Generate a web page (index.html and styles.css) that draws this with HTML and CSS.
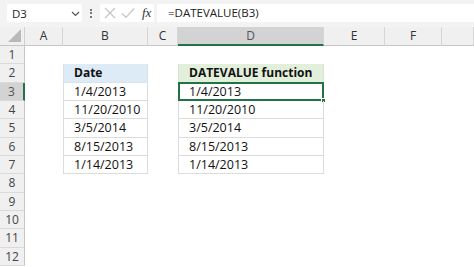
FILE: index.html
```html
<!DOCTYPE html>
<html>
<head>
<meta charset="utf-8">
<link rel="stylesheet" href="styles.css">
</head>
<body>
<div class="app">
  <div class="toolbar">
    <div class="namebox">
      <span>D3</span>
      <svg class="chev" width="9" height="6" viewBox="0 0 9 6"><path d="M1 1 L4.5 4.5 L8 1" fill="none" stroke="#555" stroke-width="1.2"/></svg>
    </div>
    <div class="dots"><i></i><i></i><i></i></div>
    <div class="fxbox">
      <svg width="12" height="12" viewBox="0 0 12 12"><path d="M1 1 L11 11 M11 1 L1 11" stroke="#c4c4c4" stroke-width="1.2" fill="none"/></svg>
      <svg width="14" height="12" viewBox="0 0 14 12"><path d="M1 6.5 L5 10.5 L13 1.5" stroke="#c4c4c4" stroke-width="1.2" fill="none"/></svg>
      <span class="fx">fx</span>
    </div>
    <div class="formula">=DATEVALUE(B3)</div>
  </div>
  <div class="sheet">
    <div class="corner"><svg width="13" height="13" viewBox="0 0 13 13"><path d="M13 0 L13 13 L0 13 Z" fill="#b9b9b9"/></svg></div>
    <div class="ch">A</div><div class="ch">B</div><div class="ch">C</div><div class="ch sel">D</div><div class="ch">E</div><div class="ch">F</div><div class="ch"></div>

    <div class="rh">1</div><div></div><div></div><div></div><div></div><div></div><div></div><div></div>

    <div class="rh">2</div><div></div><div class="t hb">Date</div><div></div><div class="t hd">DATEVALUE function</div><div></div><div></div><div></div>

    <div class="rh sel">3</div><div></div><div class="t">1/4/2013</div><div></div><div class="t active">1/4/2013<span class="handle"></span></div><div></div><div></div><div></div>

    <div class="rh">4</div><div></div><div class="t">11/20/2010</div><div></div><div class="t">11/20/2010</div><div></div><div></div><div></div>

    <div class="rh">5</div><div></div><div class="t">3/5/2014</div><div></div><div class="t">3/5/2014</div><div></div><div></div><div></div>

    <div class="rh">6</div><div></div><div class="t">8/15/2013</div><div></div><div class="t">8/15/2013</div><div></div><div></div><div></div>

    <div class="rh">7</div><div></div><div class="t">1/14/2013</div><div></div><div class="t">1/14/2013</div><div></div><div></div><div></div>

    <div class="rh">8</div><div></div><div></div><div></div><div></div><div></div><div></div><div></div>
    <div class="rh">9</div><div></div><div></div><div></div><div></div><div></div><div></div><div></div>
    <div class="rh">10</div><div></div><div></div><div></div><div></div><div></div><div></div><div></div>
    <div class="rh">11</div><div></div><div></div><div></div><div></div><div></div><div></div><div></div>
    <div class="rh">12</div><div></div><div></div><div></div><div></div><div></div><div></div><div></div>
  </div>
</div>
</body>
</html>
```
FILE: styles.css
```css
* { box-sizing: border-box; }
html, body { margin: 0; padding: 0; background: #fff; }
body { width: 474px; height: 267px; overflow: hidden; font-family: "Open Sans", "Noto Sans", sans-serif; }

.toolbar {
  height: 27px;
  background: #f3f3f3;
  display: flex;
  align-items: flex-start;
  padding: 4px 0 0 7px;
}
.namebox {
  width: 75px;
  height: 18px;
  background: #fff;
  border-radius: 2px;
  display: flex;
  align-items: center;
  justify-content: space-between;
  padding: 0 2px 0 5px;
  font-size: 11.5px;
  color: #222;
}
.chev { margin-top: 1px; }
.dots {
  width: 18px;
  height: 18px;
  display: flex;
  flex-direction: column;
  align-items: center;
  justify-content: center;
  gap: 1.5px;
}
.dots i { width: 2px; height: 2px; background: #777; display: block; }
.fxbox {
  width: 54px;
  height: 18px;
  background: #fff;
  border-radius: 2px;
  display: flex;
  align-items: center;
  gap: 5px;
  padding-left: 4px;
}
.fx {
  font-family: "Liberation Serif", "DejaVu Serif", serif;
  font-style: italic;
  font-size: 13px;
  color: #333;
  margin-left: 2px;
}
.formula {
  flex: 1;
  height: 18px;
  margin-left: 3px;
  background: #fff;
  font-size: 11.5px;
  color: #222;
  padding-left: 11px;
  line-height: 18px;
}

.sheet {
  display: grid;
  grid-template-columns: 25px 38px 85px 30px 146px 61px 57px 1fr;
  grid-template-rows: 19px repeat(12, 18.34px);
  font-size: 12.5px;
}
.corner {
  background: #f0f0f0;
  border-right: 1px solid #d0d0d0;
  border-bottom: 1px solid #c6c6c6;
  display: flex;
  align-items: flex-end;
  justify-content: flex-end;
  padding: 0 3px 3px 0;
}
.ch {
  background: #f0f0f0;
  border-right: 1px solid #d6d6d6;
  border-bottom: 1px solid #c6c6c6;
  text-align: center;
  line-height: 18px;
  color: #333;
  font-size: 12px;
}
.ch.sel {
  background: #d3d3d3;
  border-bottom: 2px solid #217346;
  color: #555;
}
.rh {
  background: #f0f0f0;
  border-right: 1px solid #c6c6c6;
  border-bottom: 1px solid #dadada;
  text-align: center;
  color: #444;
  font-size: 12px;
  display: flex;
  align-items: center;
  justify-content: center;
}
.rh.sel {
  background: #d3d3d3;
  border-right: 2px solid #217346;
  color: #555;
}
.t {
  border-left: 1px solid #dcdcdc;
  border-right: 1px solid #dcdcdc;
  border-bottom: 1px solid #dcdcdc;
  padding-left: 10px;
  display: flex;
  align-items: center;
  color: #111;
  position: relative;
}
.hb { background: #ddebf7; font-weight: 700; font-size: 12px; border-color: #d6e2ee; }
.hd { background: #e2efda; font-weight: 700; font-size: 12px; border-color: #d6e2d0; }
.active {
  border: 2px solid #217346;
  padding-left: 9px;
  margin-top: -1px;
}
.handle {
  position: absolute;
  right: -4px;
  bottom: -4px;
  width: 5px;
  height: 5px;
  background: #217346;
  border: 1px solid #fff;
}
```
